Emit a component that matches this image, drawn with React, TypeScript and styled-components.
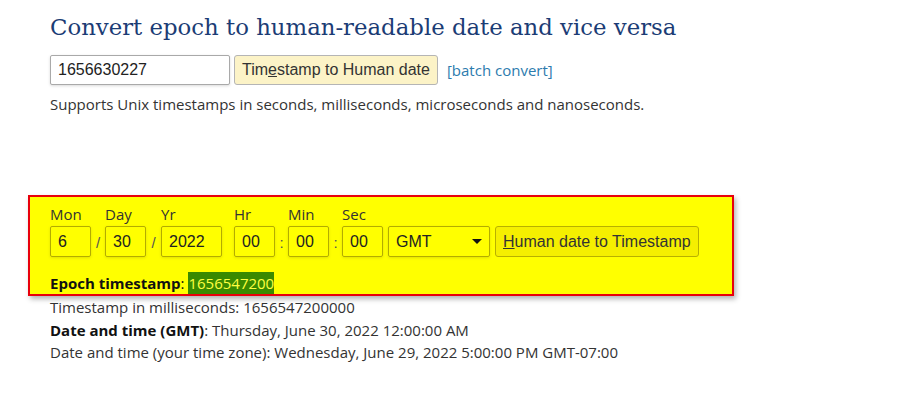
import React from 'react';
import styled, { createGlobalStyle } from 'styled-components';

const GlobalStyle = createGlobalStyle`
  body {
    margin: 0;
    background: #fff;
    font-family: "Open Sans", sans-serif;
    font-size: 15px;
    color: #333;
  }
`;

const Page = styled.div`
  padding: 12px 0 0 50px;
`;

const Title = styled.h1`
  margin: 0;
  font-family: "DejaVu Serif", serif;
  font-weight: normal;
  font-size: 22.8px;
  line-height: 31px;
  color: #1b3c75;
`;

const Row = styled.div`
  display: flex;
  align-items: center;
  gap: 4px;
`;

const TopRow = styled(Row)`
  margin-top: 12px;
`;

const TextInput = styled.input<{ w: number }>`
  box-sizing: border-box;
  width: ${({ w }) => w}px;
  height: 30px;
  padding: 0 7px;
  font-family: "Liberation Sans", Arial, sans-serif;
  font-size: 16px;
  color: #222;
  background: #fff;
  border: 1px solid #a9a9a9;
  border-radius: 2px;
  box-shadow: 0 1px 3px rgba(0, 0, 0, 0.15);
  outline: none;
`;

const Button = styled.button<{ tone: 'cream' | 'yellow' }>`
  box-sizing: border-box;
  height: 30px;
  padding: 0 7px;
  font-family: "Liberation Sans", Arial, sans-serif;
  font-size: 16px;
  color: #333;
  background: ${({ tone }) => (tone === 'cream' ? '#fcf3c7' : '#f5ef00')};
  border: 1px solid ${({ tone }) => (tone === 'cream' ? '#b5b5b5' : '#b8b000')};
  border-radius: 3px;
  cursor: pointer;
  u { text-decoration: underline; }
`;

const Link = styled.a`
  margin-left: 5px;
  color: #2c7bae;
  text-decoration: none;
  font-size: 15px;
`;

const Note = styled.p`
  margin: 8px 0 0;
  line-height: 22px;
`;

const Panel = styled.div`
  box-sizing: border-box;
  width: 706px;
  margin: 80px 0 0 -22px;
  padding: 8px 20px 0 20px;
  height: 101px;
  background: #ffff00;
  border: 2px solid #e8000b;
  box-shadow: 2px 3px 5px rgba(0, 0, 0, 0.3);
`;

const Fields = styled.div`
  display: flex;
  align-items: flex-end;
`;

const Field = styled.div`
  display: flex;
  flex-direction: column;
`;

const FieldLabel = styled.span`
  font-size: 15px;
  line-height: 19px;
  color: #333;
  margin-bottom: 2px;
`;

const Sep = styled.span<{ w: number }>`
  width: ${({ w }) => w}px;
  height: 31px;
  line-height: 33px;
  text-align: center;
  font-family: "Liberation Sans", Arial, sans-serif;
  font-size: 15px;
  color: #555;
`;

const YInput = styled(TextInput)`
  height: 31px;
  background: transparent;
  border-color: #b3ac00;
  box-shadow: 0 1px 3px rgba(0, 0, 0, 0.12);
`;

const Select = styled.div`
  box-sizing: border-box;
  display: flex;
  align-items: center;
  justify-content: space-between;
  width: 102px;
  height: 31px;
  margin-left: 5px;
  padding: 0 7px;
  font-family: "Liberation Sans", Arial, sans-serif;
  font-size: 16px;
  color: #222;
  border: 1px solid #b3ac00;
  border-radius: 2px;
  box-shadow: 0 1px 3px rgba(0, 0, 0, 0.12);
`;

const Caret = styled.span`
  width: 0;
  height: 0;
  border-left: 5px solid transparent;
  border-right: 5px solid transparent;
  border-top: 5px solid #111;
`;

const PanelButton = styled(Button)`
  height: 31px;
  margin-left: 5px;
  padding: 0 7px;
`;

const Result = styled.div`
  margin-top: 15px;
  line-height: 22px;
  color: #111;
  b { font-weight: 700; }
`;

const Hl = styled.span`
  background: #3a8a00;
  color: #ffff40;
  padding: 1px 0;
`;

const Lines = styled.div`
  margin-top: 0;
  line-height: 22.5px;
  color: #333;
  b { font-weight: 700; color: #111; }
`;

export default function App() {
  return (
    <Page>
      <GlobalStyle />
      <Title>Convert epoch to human-readable date and vice versa</Title>
      <TopRow>
        <TextInput w={180} defaultValue="1656630227" />
        <Button tone="cream">Tim<u>e</u>stamp to Human date</Button>
        <Link href="#">[batch convert]</Link>
      </TopRow>
      <Note>Supports Unix timestamps in seconds, milliseconds, microseconds and nanoseconds.</Note>
      <Panel>
        <Fields>
          <Field><FieldLabel>Mon</FieldLabel><YInput w={41} defaultValue="6" /></Field>
          <Sep w={14}>/</Sep>
          <Field><FieldLabel>Day</FieldLabel><YInput w={41} defaultValue="30" /></Field>
          <Sep w={15}>/</Sep>
          <Field><FieldLabel>Yr</FieldLabel><YInput w={61} defaultValue="2022" /></Field>
          <Sep w={12}></Sep>
          <Field><FieldLabel>Hr</FieldLabel><YInput w={41} defaultValue="00" /></Field>
          <Sep w={13}>:</Sep>
          <Field><FieldLabel>Min</FieldLabel><YInput w={41} defaultValue="00" /></Field>
          <Sep w={13}>:</Sep>
          <Field><FieldLabel>Sec</FieldLabel><YInput w={41} defaultValue="00" /></Field>
          <Select>GMT<Caret /></Select>
          <PanelButton tone="yellow"><u>H</u>uman date to Timestamp</PanelButton>
        </Fields>
        <Result><b>Epoch timestamp</b>: <Hl>1656547200</Hl></Result>
      </Panel>
      <Lines>
        <div>Timestamp in milliseconds: 1656547200000</div>
        <div><b>Date and time (GMT)</b>: Thursday, June 30, 2022 12:00:00 AM</div>
        <div>Date and time (your time zone): Wednesday, June 29, 2022 5:00:00 PM GMT-07:00</div>
      </Lines>
    </Page>
  );
}
